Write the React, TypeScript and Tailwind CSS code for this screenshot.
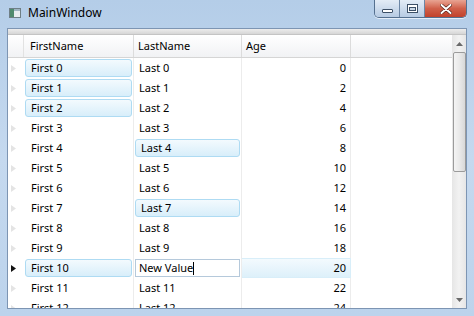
import React from 'react';

type Row = { first: string; last: string; age: number };

const rows: Row[] = Array.from({ length: 13 }, (_, i) => ({
  first: `First ${i}`,
  last: i === 10 ? 'New Value' : `Last ${i}`,
  age: i * 2,
}));

const selFirst = [0, 1, 2, 10];
const selLast = [4, 7];
const editRow = 10;

const selBox =
  'h-full rounded-[3px] border border-[#aedbf3] bg-gradient-to-b from-[#f3fafe] to-[#d8eefa] flex items-center pl-[5px]';

const WindowIcon = () => (
  <svg width="12" height="10" viewBox="0 0 12 10">
    <rect x="0.5" y="0.5" width="11" height="9" fill="#e7ecef" stroke="#6f7f86" />
    <rect x="1" y="1" width="4" height="8" fill="#4f8a6e" />
    <rect x="5" y="1" width="6" height="2" fill="#9fb4c2" />
  </svg>
);

const RowMark = ({ active }: { active: boolean }) => (
  <svg width="5" height="7" viewBox="0 0 5 7">
    <path d="M0 0 L5 3.5 L0 7 Z" fill={active ? '#111' : '#e4e4e4'} />
  </svg>
);

const CaptionButtons = () => (
  <div className="absolute top-0 right-[7px] flex h-[18px] rounded-b-[5px] border border-t-0 border-[#55708f] overflow-hidden shadow-[0_1px_0_#e6eef8]">
    <div className="w-[25px] bg-gradient-to-b from-[#e3ecf6] to-[#b7cbe3] border-r border-[#6c86a5] flex items-center justify-center">
      <div className="w-[11px] h-[4px] mt-[4px] bg-white border border-[#3c4f66] rounded-[1px]" />
    </div>
    <div className="w-[25px] bg-gradient-to-b from-[#e3ecf6] to-[#b7cbe3] border-r border-[#6c86a5] flex items-center justify-center">
      <div className="w-[11px] h-[9px] border border-[#3c4f66] bg-white flex items-center justify-center">
        <div className="w-[7px] h-[4px] mt-[1px] border border-[#3c4f66] bg-[#c9d7e6]" />
      </div>
    </div>
    <div className="w-[41px] bg-gradient-to-b from-[#e8a493] via-[#d0604a] to-[#c1412b] flex items-center justify-center">
      <svg width="12" height="10" viewBox="0 0 12 10">
        <path d="M1.5 1 L10.5 9 M10.5 1 L1.5 9" stroke="#4a1a12" strokeWidth="3.2" strokeLinecap="round" />
        <path d="M1.5 1 L10.5 9 M10.5 1 L1.5 9" stroke="#ffffff" strokeWidth="2" strokeLinecap="round" />
      </svg>
    </div>
  </div>
);

const ScrollBar = () => (
  <div className="w-[14px] bg-gradient-to-r from-[#e6e6e6] via-[#f2f2f2] to-[#e6e6e6] flex flex-col items-center">
    <div className="h-[17px] w-full flex items-center justify-center">
      <svg width="7" height="4" viewBox="0 0 7 4">
        <path d="M0 4 L3.5 0 L7 4 Z" fill="#6a6a6a" />
      </svg>
    </div>
    <div className="w-[13px] h-[120px] rounded-[2px] border border-[#9b9b9b] bg-gradient-to-r from-[#f4f4f4] via-[#e9e9e9] to-[#d8d8d8]" />
    <div className="flex-1" />
    <div className="h-[17px] w-full flex items-center justify-center">
      <svg width="7" height="4" viewBox="0 0 7 4">
        <path d="M0 0 L3.5 4 L7 0 Z" fill="#6a6a6a" />
      </svg>
    </div>
  </div>
);

export default function App() {
  return (
    <div className="w-[474px] h-[316px] relative overflow-hidden bg-gradient-to-b from-[#b4cde8] via-[#c5d9ef] to-[#bcd3ec] font-['Noto_Sans',sans-serif] text-[11px] text-black">
      <div className="h-[28px] flex items-center pl-[9px] gap-[7px] pb-[2px]">
        <WindowIcon />
        <span className="text-[12px] leading-none">MainWindow</span>
      </div>
      <CaptionButtons />

      <div className="mx-[7px] h-[281px] border border-[#7d95b3] bg-white flex flex-col overflow-hidden">
        <div className="h-[6px] bg-gradient-to-b from-[#ececec] to-[#d6d6d6] border-b border-[#c4c4c4]" />
        <div className="flex flex-1 min-h-0">
          <div className="flex-1 flex flex-col overflow-hidden">
            {/* header */}
            <div className="h-[23px] flex shrink-0 border-b border-[#d5d5d5] bg-gradient-to-b from-[#ffffff] to-[#f1f2f4]">
              <div className="w-[16px] border-r border-[#e2e2e2]" />
              <div className="w-[110px] border-r border-[#dcdcdc] pl-[6px] flex items-center">FirstName</div>
              <div className="w-[108px] border-r border-[#dcdcdc] pl-[4px] flex items-center">LastName</div>
              <div className="w-[109px] border-r border-[#dcdcdc] pl-[4px] flex items-center">Age</div>
              <div className="flex-1" />
            </div>
            {rows.map((r, i) => {
              const isEdit = i === editRow;
              return (
                <div key={i} className="h-[20px] flex shrink-0">
                  <div className="w-[16px] flex items-center pl-[3px]">
                    <RowMark active={isEdit} />
                  </div>
                  <div className="w-[110px] border-r border-[#ececec] p-[1px] pr-[1px]">
                    {selFirst.includes(i) ? (
                      <div className={selBox}>{r.first}</div>
                    ) : (
                      <div className="h-full flex items-center pl-[6px]">{r.first}</div>
                    )}
                  </div>
                  <div className="w-[108px] border-r border-[#ececec] p-[1px]">
                    {isEdit ? (
                      <div className="h-full border border-[#b5c9db] bg-white flex items-center pl-[3px]">
                        <span>{r.last}</span>
                        <span className="h-[13px] border-l border-black" />
                      </div>
                    ) : selLast.includes(i) ? (
                      <div className={selBox}>{r.last}</div>
                    ) : (
                      <div className="h-full flex items-center pl-[4px]">{r.last}</div>
                    )}
                  </div>
                  <div
                    className={
                      isEdit
                        ? 'w-[109px] border-r border-[#d8eef9] border-y bg-gradient-to-b from-[#f3fafe] to-[#ddf0fa] flex items-center justify-end pr-[4px]'
                        : 'w-[109px] border-r border-[#ececec] flex items-center justify-end pr-[4px]'
                    }
                  >
                    {r.age}
                  </div>
                  <div className="flex-1" />
                </div>
              );
            })}
          </div>
          <ScrollBar />
        </div>
      </div>
    </div>
  );
}
